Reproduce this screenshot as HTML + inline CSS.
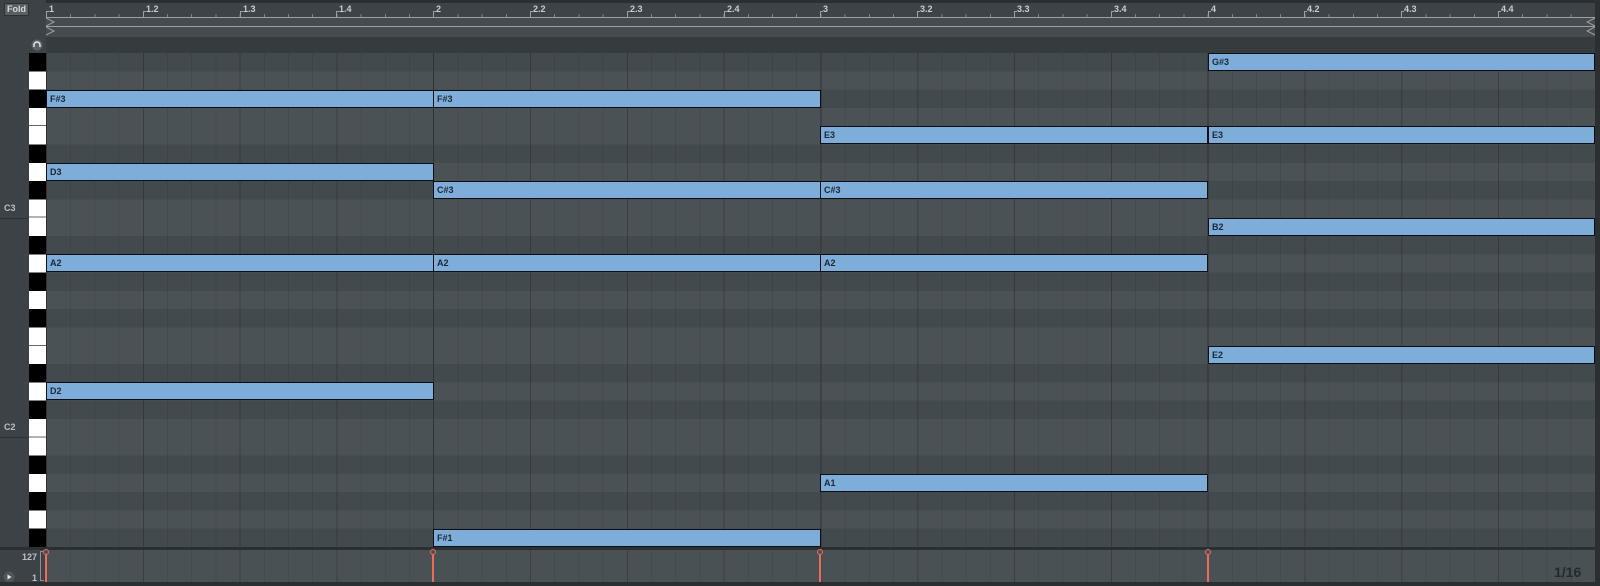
<!DOCTYPE html>
<html><head><meta charset="utf-8"><style>
*{margin:0;padding:0;box-sizing:border-box}
body{width:1600px;height:586px;background:#2b2f31;position:relative;overflow:hidden;font-family:"Liberation Sans",sans-serif}
.abs{position:absolute}
#left{left:0;top:0;width:46px;height:586px;background:#3c4245}
#fold{left:4px;top:3px;width:25px;height:13px;background:#596064;border:1px solid #2c3133;color:#d6dbdd;font-size:9px;font-weight:bold;text-align:center;line-height:11px}
#ruler{left:46px;top:3px;width:1549px;height:14px;background:#3d4346}
#strip1{left:46px;top:17px;width:1549px;height:20px;background:#454b4e;border-top:1px solid #9aa0a3}
#strip1b{left:46px;top:26px;width:1549px;height:1px;background:#9aa0a3}
#dark{left:46px;top:37px;width:1549px;height:16px;background:#363b3e}
#keys{left:29px;top:53px;width:17px;height:494px;
background:repeating-linear-gradient(to bottom,
#000 0,#000 18.3px,#fff 18.3px,#fff 36.6px,#000 36.6px,#000 54.9px,#fff 54.9px,#fff 72.2px,#666 72.2px,#666 73.2px,#fff 73.2px,#fff 91.5px,#000 91.5px,#000 109.8px,#fff 109.8px,#fff 128.1px,#000 128.1px,#000 146.4px,#fff 146.4px,#fff 163.7px,#666 163.7px,#666 164.7px,#fff 164.7px,#fff 183px,#000 183px,#000 201.3px,#fff 201.3px,#fff 219.55px)}
#grid{left:46px;top:53px;width:1549px;height:494px;
background:
repeating-linear-gradient(to right,#2e3335 0,#2e3335 1px,transparent 1px,transparent 387.25px),
repeating-linear-gradient(to right,rgba(0,0,0,.16) 0,rgba(0,0,0,.16) 1px,transparent 1px,transparent 96.81px),
repeating-linear-gradient(to right,rgba(0,0,0,.09) 0,rgba(0,0,0,.09) 1px,transparent 1px,transparent 24.2px),
repeating-linear-gradient(to bottom,
#434a4d 0,#434a4d 18.3px,#4b5255 18.3px,#4b5255 36.6px,#434a4d 36.6px,#434a4d 54.9px,#4b5255 54.9px,#4b5255 91.5px,#434a4d 91.5px,#434a4d 109.8px,#4b5255 109.8px,#4b5255 128.1px,#434a4d 128.1px,#434a4d 146.4px,#4b5255 146.4px,#4b5255 183px,#434a4d 183px,#434a4d 201.3px,#4b5255 201.3px,#4b5255 219.55px)}
#ticks{left:46px;top:14px;width:1549px;height:3px;background:repeating-linear-gradient(to right,#7d8386 0,#7d8386 1px,transparent 1px,transparent 24.2px)}
.n{position:absolute;height:18px;background:#7eadda;border:1px solid #0b0f12;font-size:9px;font-weight:bold;color:#1c2733;line-height:16px;padding-left:3px}
.rl{position:absolute;top:3px;font-size:9px;font-weight:bold;color:#c8cdd0;padding-left:3px;height:14px;line-height:13px}
.rl:before{content:"";position:absolute;left:0;top:8px;width:2px;height:6px;border-left:1px solid #9aa0a3;border-top:1px solid #9aa0a3}
.lab{position:absolute;left:4px;font-size:9px;font-weight:bold;color:#b9bfc2}
#vel{left:46px;top:550px;width:1549px;height:32px;background:
repeating-linear-gradient(to right,rgba(0,0,0,.16) 0,rgba(0,0,0,.16) 1px,transparent 1px,transparent 96.81px),
repeating-linear-gradient(to right,rgba(0,0,0,.08) 0,rgba(0,0,0,.08) 1px,transparent 1px,transparent 24.2px),#4a5154}
.vm{position:absolute;top:550px;width:2px;height:32px;background:#f06a5c}
.vd{position:absolute;top:549px;width:6px;height:6px;border:1.5px solid #f06a5c;border-radius:50%;background:#4a5154}
</style></head><body>
<div class="abs" id="left"></div>
<div class="abs" id="fold">Fold</div>
<div class="abs" id="ruler"></div>
<div class="abs" id="ticks"></div>
<div class="rl" style="left:46px">1</div>
<div class="rl" style="left:143px">1.2</div>
<div class="rl" style="left:240px">1.3</div>
<div class="rl" style="left:336px">1.4</div>
<div class="rl" style="left:433px">2</div>
<div class="rl" style="left:530px">2.2</div>
<div class="rl" style="left:627px">2.3</div>
<div class="rl" style="left:724px">2.4</div>
<div class="rl" style="left:820px">3</div>
<div class="rl" style="left:917px">3.2</div>
<div class="rl" style="left:1014px">3.3</div>
<div class="rl" style="left:1111px">3.4</div>
<div class="rl" style="left:1208px">4</div>
<div class="rl" style="left:1304px">4.2</div>
<div class="rl" style="left:1401px">4.3</div>
<div class="rl" style="left:1498px">4.4</div>
<div class="abs" id="strip1"></div>
<div class="abs" id="strip1b"></div>
<svg class="abs" style="left:46px;top:17px" width="10" height="20"><path d="M0 1 L8 5 L0 9 M0 10 L8 14 L0 18" stroke="#9aa0a3" fill="none"/></svg>
<svg class="abs" style="left:1586px;top:17px" width="10" height="20"><path d="M9 1 L1 5 L9 9 M9 10 L1 14 L9 18" stroke="#9aa0a3" fill="none"/></svg>
<div class="abs" id="dark"></div>
<svg class="abs" style="left:31px;top:39px" width="12" height="12"><circle cx="6" cy="6" r="5.5" fill="#5b6265"/><path d="M3 8 V6 a3 3 0 0 1 6 0 V8" stroke="#e5e8ea" stroke-width="1.5" fill="none"/></svg>
<div class="abs" id="keys"></div>
<div class="abs" style="left:0;top:218px;width:29px;height:1px;background:#2f3436"></div>
<div class="abs" style="left:0;top:437px;width:29px;height:1px;background:#2f3436"></div>
<div class="lab" style="top:203px">C3</div>
<div class="lab" style="top:422px">C2</div>
<div class="abs" id="grid"></div>
<div class="n" style="left:1208px;top:53px;width:387px">G#3</div>
<div class="n" style="left:46px;top:89.6px;width:388px">F#3</div>
<div class="n" style="left:433px;top:89.6px;width:388px">F#3</div>
<div class="n" style="left:820px;top:126.2px;width:388px">E3</div>
<div class="n" style="left:1208px;top:126.2px;width:387px">E3</div>
<div class="n" style="left:46px;top:162.8px;width:388px">D3</div>
<div class="n" style="left:433px;top:181.1px;width:388px">C#3</div>
<div class="n" style="left:820px;top:181.1px;width:388px">C#3</div>
<div class="n" style="left:1208px;top:217.7px;width:387px">B2</div>
<div class="n" style="left:46px;top:254.3px;width:388px">A2</div>
<div class="n" style="left:433px;top:254.3px;width:388px">A2</div>
<div class="n" style="left:820px;top:254.3px;width:388px">A2</div>
<div class="n" style="left:1208px;top:345.7px;width:387px">E2</div>
<div class="n" style="left:46px;top:382.3px;width:388px">D2</div>
<div class="n" style="left:820px;top:473.8px;width:388px">A1</div>
<div class="n" style="left:433px;top:528.7px;width:388px">F#1</div>
<div class="abs" style="left:0;top:547px;width:1600px;height:3px;background:#2b2f31"></div>
<div class="abs" id="vel"></div>
<div class="abs" style="left:22px;top:552px;font-size:9px;font-weight:bold;color:#b9c3cc">127</div>
<div class="abs" style="left:32px;top:573px;font-size:9px;font-weight:bold;color:#b9c3cc">1</div>
<div class="abs" style="left:40px;top:551px;width:4px;height:30px;border:1px solid #8a9093;border-right:none"></div>
<svg class="abs" style="left:3px;top:571px" width="12" height="12"><circle cx="6" cy="6" r="5.5" fill="#50575a"/><path d="M4.5 3.5 L8.5 6 L4.5 8.5Z" fill="#e5e8ea"/></svg>
<div class="vm" style="left:45px"></div><div class="vd" style="left:43px"></div>
<div class="vm" style="left:432px"></div><div class="vd" style="left:430px"></div>
<div class="vm" style="left:819px"></div><div class="vd" style="left:817px"></div>
<div class="vm" style="left:1207px"></div><div class="vd" style="left:1205px"></div>
<div class="abs" style="left:1554px;top:564px;font-size:14px;font-weight:bold;color:#25292b">1/16</div>
<div class="abs" style="left:1595px;top:0;width:5px;height:586px;background:#2b2f31"></div>
<div class="abs" style="left:0;top:582px;width:1600px;height:4px;background:#2b2f31"></div>
</body></html>
